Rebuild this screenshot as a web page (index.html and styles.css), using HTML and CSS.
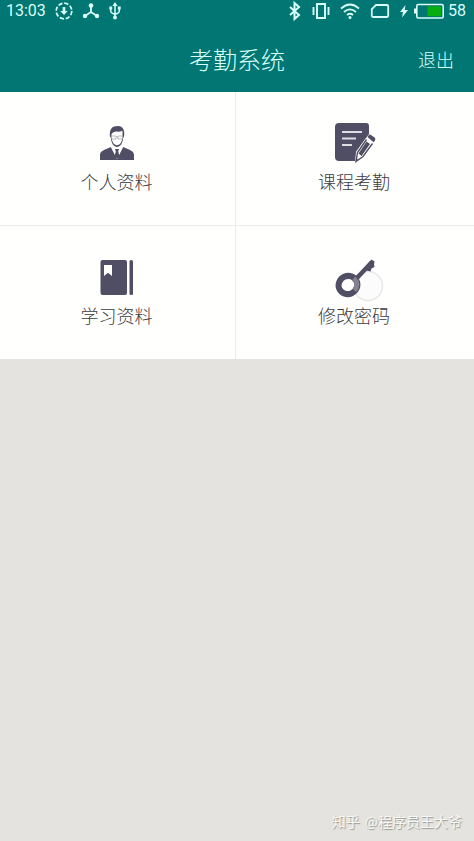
FILE: index.html
```html
<!DOCTYPE html>
<html lang="zh-CN">
<head>
<meta charset="utf-8">
<meta name="viewport" content="width=device-width, initial-scale=1">
<title>考勤系统</title>
<link rel="stylesheet" href="styles.css">
</head>
<body>
<div class="top">
  <div class="status">
    <div class="status-group status-left">
      <span class="time">13:03</span>
      <svg width="18" height="18" viewBox="0 0 18 18"><circle cx="9" cy="9" r="7.8" fill="none" stroke="currentColor" stroke-width="1.7" stroke-dasharray="4.3 1.83"/><path d="M7.7 5h2.6v4h2.4L9 13 5.300 9h2.400z" fill="currentColor"/></svg>
      <svg width="18" height="18" viewBox="0 0 18 18"><path d="M9 3v7M9 10l-6 4M9 10l6 4" fill="none" stroke="currentColor" stroke-width="1.8"/><g fill="currentColor"><circle cx="9" cy="3.500" r="2.300"/><circle cx="3" cy="14" r="2.200"/><circle cx="15" cy="14" r="2.200"/></g></svg>
      <svg width="12" height="18" viewBox="0 0 12 18"><path d="M6 3v12M1.700 6v3q0 2 4.300 3.400Q10.300 11 10.300 9V6" fill="none" stroke="currentColor" stroke-width="1.500"/><path d="M6 0l2.600 4H3.400zM.3 4.500h2.900v3H.3zM8.800 4.500h2.900v3H8.800z" fill="currentColor"/><circle cx="6" cy="15.500" r="1.900" fill="currentColor"/></svg>
    </div>
    <div class="status-group status-right">
      <svg width="14" height="18" viewBox="0 0 14 18"><path d="M2 5l9 8-4.500 4V1L11 5l-9 8" fill="none" stroke="currentColor" stroke-width="2"/></svg>
      <svg width="18" height="18" viewBox="0 0 18 18"><path d="M5 2h8v14H5zM1.500 5v8M16.500 5v8" fill="none" stroke="currentColor" stroke-width="1.900"/></svg>
      <svg width="20" height="18" viewBox="0 0 20 18"><path d="M1 6.500Q10-1.500 19 6.500M4 10q6-5.200 12 0M7 13q3-2.500 6 0" fill="none" stroke="currentColor" stroke-width="1.800"/><circle cx="10" cy="15.500" r="1.500" fill="currentColor"/></svg>
      <svg width="20" height="18" viewBox="0 0 20 18"><path d="M6 3h11q1.200 0 1.200 1.200v9.600q0 1.200-1.200 1.200H3q-1.200 0-1.200-1.200V7.200z" fill="none" stroke="currentColor" stroke-width="1.800"/></svg>
      <svg class="bolt" width="8" height="18" viewBox="0 0 8 18"><path d="M5.500 3L0 10h3L2 15.500 8 8H4.700z" fill="currentColor"/></svg>
      <svg width="30" height="18" viewBox="0 0 30 18"><path d="M0 6.500h2v5H0z" fill="currentColor"/><rect x="2.800" y="2.500" width="26.400" height="13.500" rx="1.500" fill="none" stroke="currentColor" stroke-width="1.600"/><path d="M13.500 4.300h13.500v9.900H13.500z" fill="#08ad12"/></svg>
      <span class="level">58</span>
    </div>
  </div>
  <header class="bar">
    <h1>考勤系统</h1>
    <button class="logout" type="button">退出</button>
  </header>
</div>
<main class="content">
  <nav class="menu">
    <a class="item" href="#profile">
      <svg class="icon" viewBox="0 0 48 48"><path d="M17 18c-1-8 2-11 8-11 5 0 7 4 6 11l-1 1c0 5-3 9-6 9s-6-4-6-9z" fill="currentColor"/><path d="M18.500 15q2-3 5-2.500t6-.8v5.500c0 5-2.500 9-5.500 9s-5.500-4-5.500-9z" fill="#fffffd"/><path d="M18 17h5v3h-4zM25 17h5l-1 3h-4zM23 18h2" fill="none" stroke="#aaa8b0" stroke-width=".8"/><path d="M7 41v-5c0-4 4-5 11-8l6 12 6-12c7 3 11 4 11 8v5z" fill="currentColor"/><path d="M18 28l6 3 6-3-6 12z" fill="#fffffd"/><path d="M22 30h4l-.8 2.500 1.300 4.500-2.500 3-2.500-3 1.300-4.500z" fill="currentColor"/></svg>
      <span>个人资料</span>
    </a>
    <a class="item" href="#attendance">
      <svg class="icon" viewBox="0 0 48 48"><path d="M9 4h27q3 0 3 3v8L26 33v9H9q-4 0-4-4V8q0-4 4-4z" fill="currentColor"/><path d="M12 13h20M12 19.500h14M12 26h10" fill="none" stroke="#dedde4" stroke-width="1.800"/><path d="M26 33l10-14 7 5-10 14-8 5z" fill="#fffffd"/><path d="M36.500 20.500L27.500 33.500 26 42.500l7-5 9.500-13" fill="none" stroke="currentColor" stroke-width="1.400"/><path d="M37.500 18l1-1.500q1-1.500 2.500-.5l3.500 2.500q1.500 1.200.5 2.700l-1.500 2z" fill="currentColor"/><path d="M36.500 22.500l3.500 2.500-8.500 12-3-2.500zM26.500 39l2 2-2.500 1.700z" fill="currentColor"/></svg>
      <span>课程考勤</span>
    </a>
    <a class="item" href="#materials">
      <svg class="icon" viewBox="0 0 48 48"><rect x="7.500" y="7" width="26.500" height="35" rx="2" fill="currentColor"/><path d="M11 12h8v11l-4-3.200-4 3.200z" fill="#fffffd"/><rect x="36.500" y="7" width="3.500" height="35" rx="1.500" fill="currentColor"/></svg>
      <span>学习资料</span>
    </a>
    <a class="item" href="#password">
      <svg class="icon" viewBox="0 0 48 48"><circle cx="38" cy="33" r="14.500" fill="#fcfcfc" stroke="#e8e8eb" stroke-width="1.500"/><path d="M26 26L42 9" stroke="currentColor" stroke-width="4.500"/><path d="M37 12l4.500-5.500 3 2-.5 3 .5 2.500-3 1.500-1 3-4-1z" fill="currentColor"/><ellipse cx="18" cy="32" rx="9.500" ry="9" transform="rotate(-25 18 32)" fill="#fffffd" stroke="currentColor" stroke-width="6"/><path d="M23.500 25.500q6 5 1 12" fill="none" stroke="#85838f" stroke-width="5"/></svg>
      <span>修改密码</span>
    </a>
  </nav>
</main>
<footer class="credit"><span class="brand">知乎</span><span>@程序员王大爷</span></footer>
</body>
</html>
```
FILE: styles.css
```css
* {
  box-sizing: border-box;
}

body {
  display: flex;
  flex-direction: column;
  min-height: 100vh;
  margin: 0;
  background: #e4e3df;
  color: #3c3b42;
  font-family: "Noto Sans CJK SC", sans-serif;
  font-weight: 300;
}

svg {
  display: block;
  flex: none;
  overflow: visible;
}

.top {
  background: #027673;
  color: #d8fffa;
}

.status {
  display: flex;
  justify-content: space-between;
  height: 22px;
  padding: 0 8px 0 6px;
  font: 400 16px/22px Roboto, sans-serif;
}

.status-group {
  display: flex;
  align-items: center;
}

.status-left {
  gap: 9px;
}

.status-right {
  gap: 10px;
}

.bolt {
  margin-right: -4px;
}

.level {
  margin-left: -6px;
}

.bar {
  display: grid;
  grid-template-columns: 1fr auto 1fr;
  align-items: center;
  height: 70px;
  padding: 4px 20px 0;
}

h1 {
  grid-column: 2;
  margin: 0;
  font-size: 24px;
  font-weight: 300;
  line-height: 36px;
}

.logout {
  justify-self: end;
  padding: 0;
  border: 0;
  background: none;
  color: inherit;
  font: inherit;
  font-size: 18px;
  line-height: 24px;
}

.content {
  flex: 1;
}

.menu {
  display: grid;
  grid-template-columns: 235fr 238fr;
  gap: 1px;
  background: #ebebe9;
}

.item {
  display: flex;
  flex-direction: column;
  align-items: center;
  gap: 2px;
  padding: 27px 2px 32px 0;
  background: #fffffd;
  color: inherit;
  font-size: 18px;
  line-height: 24px;
  text-decoration: none;
}

.icon {
  width: 48px;
  height: 48px;
  color: #504e64;
}

.credit {
  display: flex;
  justify-content: flex-end;
  gap: 5px;
  padding: 8px 12px;
  color: #f7f7f4;
  font-size: 14px;
  font-weight: 400;
  line-height: 24px;
  text-shadow: 1px 1px 1px #999994;
}
```
